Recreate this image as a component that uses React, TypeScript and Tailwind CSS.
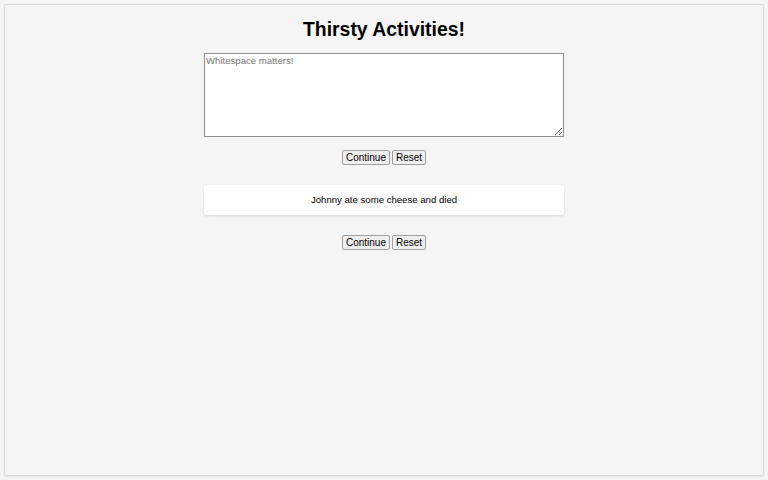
import React from 'react';

function Buttons() {
  return (
    <div className="flex items-center gap-[2px]">
      <button className="h-[15px] px-[3px] border border-[#a0a0a0] bg-[#efefef] text-[10px] leading-none text-black rounded-[2px]">
        Continue
      </button>
      <button className="h-[15px] px-[3px] border border-[#a0a0a0] bg-[#efefef] text-[10px] leading-none text-black rounded-[2px]">
        Reset
      </button>
    </div>
  );
}

export default function App() {
  return (
    <div className="h-[480px] w-[768px] bg-[#f5f5f5] p-[4px] font-['Liberation_Sans',Arial,sans-serif]">
      <div className="flex h-full flex-col items-center border border-[#dcdcdc] rounded-[2px] shadow-[0_1px_2px_rgba(0,0,0,0.08)]">
        {/* Title */}
        <h1 className="mt-[12px] text-[19.4px] font-bold leading-[24px] text-black">
          Thirsty Activities!
        </h1>

        {/* Input */}
        <textarea
          className="mt-[12px] h-[84px] w-[360px] resize-y border border-[#8f8f8f] bg-white px-[1px] py-[1px] text-[9.6px] leading-[12px] text-black placeholder:text-[#777]"
          placeholder="Whitespace matters!"
        />

        <div className="mt-[13px]">
          <Buttons />
        </div>

        {/* Result */}
        <div className="mt-[20px] flex h-[30px] w-[360px] items-center justify-center rounded-[3px] bg-white text-[9.6px] text-black shadow-[0_1px_3px_rgba(0,0,0,0.12)]">
          Johnny ate some cheese and died
        </div>

        <div className="mt-[20px]">
          <Buttons />
        </div>
      </div>
    </div>
  );
}
